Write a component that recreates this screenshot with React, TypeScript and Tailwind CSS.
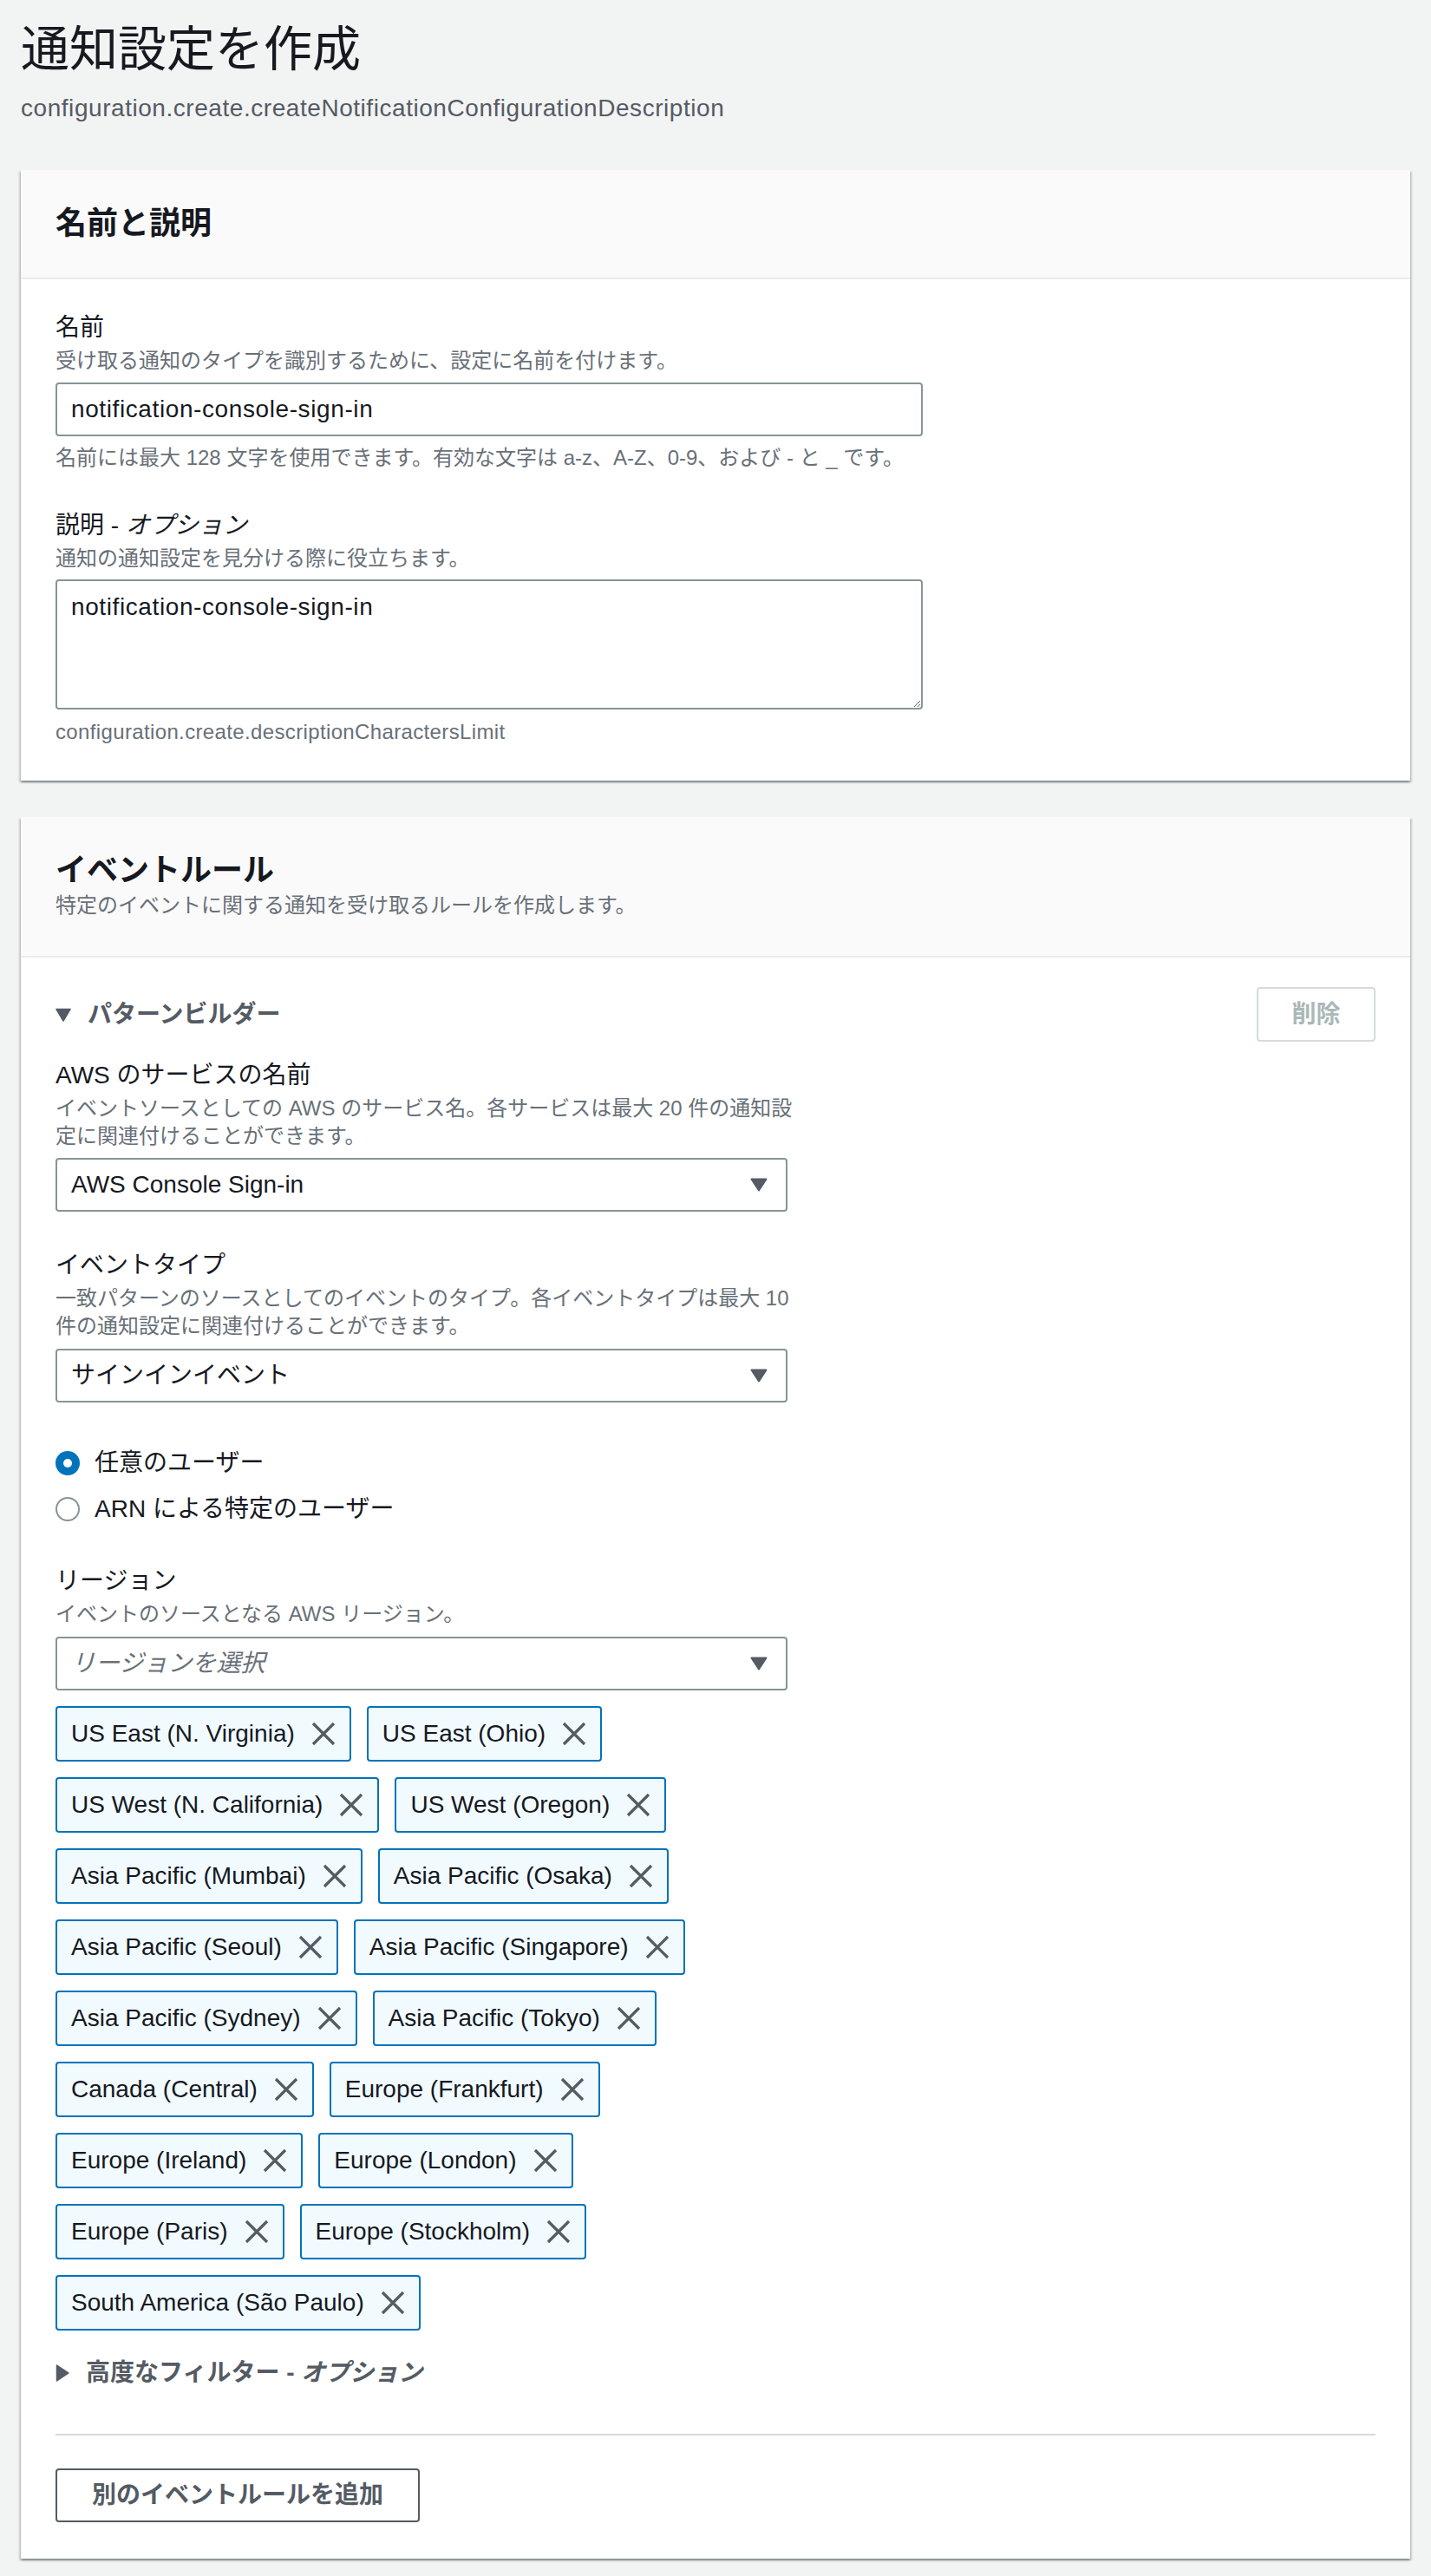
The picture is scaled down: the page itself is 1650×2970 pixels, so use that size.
import React from 'react';

const regions = [
  'US East (N. Virginia)',
  'US East (Ohio)',
  'US West (N. California)',
  'US West (Oregon)',
  'Asia Pacific (Mumbai)',
  'Asia Pacific (Osaka)',
  'Asia Pacific (Seoul)',
  'Asia Pacific (Singapore)',
  'Asia Pacific (Sydney)',
  'Asia Pacific (Tokyo)',
  'Canada (Central)',
  'Europe (Frankfurt)',
  'Europe (Ireland)',
  'Europe (London)',
  'Europe (Paris)',
  'Europe (Stockholm)',
  'South America (São Paulo)'
];

const Caret = () => (
  <svg width="20" height="16" viewBox="0 0 20 16" className="shrink-0">
    <path d="M1.5 1.5 H18.5 L10 14.5 Z" fill="#545b64" stroke="#545b64" strokeWidth="2" strokeLinejoin="round" />
  </svg>
);

const CloseIcon = () => (
  <svg width="32" height="32" viewBox="0 0 16 16" className="shrink-0">
    <path d="M2 2 L14 14 M14 2 L2 14" stroke="#545b64" strokeWidth="1.6" fill="none" />
  </svg>
);

const TriangleDown = () => (
  <svg width="18" height="16" viewBox="0 0 18 16" className="shrink-0">
    <path d="M1 1.5 H17 L9 15 Z" fill="#545b64" stroke="#545b64" strokeWidth="1.5" strokeLinejoin="round" />
  </svg>
);

const TriangleRight = () => (
  <svg width="16" height="20" viewBox="0 0 16 20" className="shrink-0">
    <path d="M1.5 1 V19 L15 10 Z" fill="#545b64" stroke="#545b64" strokeWidth="1.5" strokeLinejoin="round" />
  </svg>
);

interface FieldProps {
  label: React.ReactNode;
  description?: React.ReactNode;
  constraint?: string;
  className?: string;
  children: React.ReactNode;
}

const Field: React.FC<FieldProps> = ({ label, description, constraint, className = '', children }) => (
  <div className={className}>
    <div className="text-[28px] leading-[44px] text-[#16191f]">{label}</div>
    {description && <div className="text-[24px] leading-[32px] text-[#687078]">{description}</div>}
    <div className="mt-[9px]">{children}</div>
    {constraint && <div className="mt-[9px] text-[24px] leading-[32px] text-[#687078]">{constraint}</div>}
  </div>
);

const Select = ({ value, placeholder = false }: { value: string; placeholder?: boolean }) => (
  <div className="flex h-[62px] w-full items-center justify-between rounded-[4px] border-2 border-[#879596] bg-white pl-[16px] pr-[21px]">
    <span className={placeholder ? 'text-[28px] italic text-[#687078]' : 'text-[28px] text-[#16191f]'}>{value}</span>
    <Caret />
  </div>
);

const Token = ({ label }: { label: string }) => (
  <div className="flex h-[64px] items-center rounded-[4px] border-2 border-[#0073bb] bg-[#f1faff] pl-[16px] pr-[14px]">
    <span className="text-[28px] text-[#16191f] whitespace-nowrap">{label}</span>
    <span className="ml-[17px] flex items-center">
      <CloseIcon />
    </span>
  </div>
);

const cardShadow =
  'shadow-[0_2px_2px_0_rgba(0,28,36,0.3),2px_2px_2px_0_rgba(0,28,36,0.15),-2px_2px_2px_0_rgba(0,28,36,0.15)]';

export default function App() {
  return (
    <div className="min-h-screen bg-[#f2f3f3] px-6 pt-[21px] pb-5 font-['Liberation_Sans','Noto_Sans_CJK_JP',sans-serif] text-[#16191f]">
      <h1 className="text-[56px] leading-[72px] font-normal">通知設定を作成</h1>
      <p className="mt-3 text-[28px] leading-[40px] tracking-[0.55px] text-[#545b64]">
        configuration.create.createNotificationConfigurationDescription
      </p>

      {/* 名前と説明 */}
      <section className={`mt-[51px] bg-white ${cardShadow}`}>
        <div className="border-b-2 border-[#eaeded] bg-[#fafafa] px-10 py-10">
          <h2 className="text-[36px] leading-[44px] font-bold">名前と説明</h2>
        </div>
        <div className="px-10 pt-[34px] pb-10">
          <Field
            label="名前"
            description="受け取る通知のタイプを識別するために、設定に名前を付けます。"
            constraint="名前には最大 128 文字を使用できます。有効な文字は a-z、A-Z、0-9、および - と _ です。"
          >
            <input
              readOnly
              value="notification-console-sign-in"
              className="block h-[62px] w-[1000px] rounded-[4px] border-2 border-[#879596] bg-white px-[16px] text-[28px] tracking-[0.6px] text-[#16191f] outline-none"
            />
          </Field>
          <div className="mt-10">
            <div className="text-[28px] leading-[44px]">
              説明 - <i>オプション</i>
            </div>
            <div className="text-[24px] leading-[32px] text-[#687078]">通知の通知設定を見分ける際に役立ちます。</div>
            <textarea
              readOnly
              defaultValue="notification-console-sign-in"
              className="mt-2 block h-[150px] w-[1000px] rounded-[4px] border-2 border-[#879596] bg-white px-[16px] pt-[10px] text-[28px] leading-[40px] tracking-[0.6px] text-[#16191f] outline-none"
            />
            <div className="mt-[10px] text-[24px] leading-[32px] tracking-[0.36px] text-[#687078]">
              configuration.create.descriptionCharactersLimit
            </div>
          </div>
        </div>
      </section>

      {/* イベントルール */}
      <section className={`mt-[42px] bg-white ${cardShadow}`}>
        <div className="border-b-2 border-[#eaeded] bg-[#fafafa] px-10 py-10">
          <h2 className="text-[36px] leading-[44px] font-bold">イベントルール</h2>
          <p className="text-[24px] leading-[36px] text-[#687078]">特定のイベントに関する通知を受け取るルールを作成します。</p>
        </div>
        <div className="px-10 pt-[34px] pb-[42px]">
          <div className="flex h-[63px] items-center justify-between">
            <div className="flex items-center gap-[19px] text-[28px] font-bold text-[#545b64]">
              <TriangleDown />
              <span>パターンビルダー</span>
            </div>
            <button
              type="button"
              disabled
              className="h-[63px] w-[137px] rounded-[4px] border-2 border-[#d5dbdb] bg-white text-[28px] font-bold text-[#aab7b8]"
            >
              削除
            </button>
          </div>

          <div className="w-[844px]">
            <Field
              className="mt-[17px]"
              label="AWS のサービスの名前"
              description={
                <>
                  <span className="block whitespace-nowrap">イベントソースとしての AWS のサービス名。各サービスは最大 20 件の通知設</span>
                  <span className="block whitespace-nowrap">定に関連付けることができます。</span>
                </>
              }
            >
              <Select value="AWS Console Sign-in" />
            </Field>

            <div className="mt-10">
              <div className="text-[28px] leading-[44px]">イベントタイプ</div>
              <div className="text-[24px] leading-[32px] text-[#687078]">
                <span className="block whitespace-nowrap">一致パターンのソースとしてのイベントのタイプ。各イベントタイプは最大 10</span>
                <span className="block whitespace-nowrap">件の通知設定に関連付けることができます。</span>
              </div>
              <div className="mt-[10px]">
                <Select value="サインインイベント" />
              </div>
            </div>

            <div className="mt-12 flex flex-col gap-[9px]">
              <label className="flex h-[44px] items-center gap-[17px] text-[28px]">
                <span className="flex h-[28px] w-[28px] items-center justify-center rounded-full bg-[#0073bb]">
                  <span className="h-[10px] w-[10px] rounded-full bg-white" />
                </span>
                任意のユーザー
              </label>
              <label className="flex h-[44px] items-center gap-[17px] text-[28px]">
                <span className="h-[28px] w-[28px] rounded-full border-2 border-[#879596] bg-white" />
                ARN による特定のユーザー
              </label>
            </div>

            <div className="mt-[39px]">
              <div className="text-[28px] leading-[44px]">リージョン</div>
              <div className="text-[24px] leading-[32px] text-[#687078]">イベントのソースとなる AWS リージョン。</div>
              <div className="mt-[10px]">
                <Select value="リージョンを選択" placeholder />
              </div>
              <div className="mt-[18px] flex flex-wrap gap-[18px]">
                {regions.map((r) => (
                  <Token key={r} label={r} />
                ))}
              </div>
            </div>
          </div>

          <div className="mt-[27px] flex h-[44px] items-center gap-[19px] text-[28px] font-bold text-[#545b64]">
            <TriangleRight />
            <span>
              高度なフィルター - <i>オプション</i>
            </span>
          </div>

          <div className="mt-[48px] border-t-2 border-[#d5dbdb]" />

          <button
            type="button"
            className="mt-[38px] h-[62px] rounded-[4px] border-2 border-[#545b64] bg-white px-[40px] text-[28px] font-bold text-[#545b64]"
          >
            別のイベントルールを追加
          </button>
        </div>
      </section>
    </div>
  );
}
